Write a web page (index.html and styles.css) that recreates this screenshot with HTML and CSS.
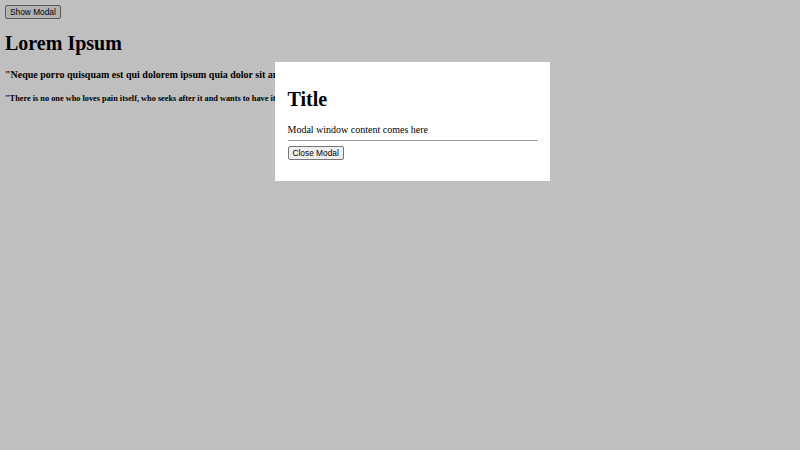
FILE: index.html
```html
<!DOCTYPE html>
<html lang="en">
<head>
    <meta charset="UTF-8">
    <meta name="viewport" content="width=device-width, initial-scale=1.0">
    <title>Modal Demo</title>
    <link rel="stylesheet" href="styles.css">
</head>
<body>

    <button class="btn" onclick="openModal()">Show Modal</button>

    <h1>Lorem Ipsum</h1>
    <h4>"Neque porro quisquam est qui dolorem ipsum quia dolor sit amet, consectetur, adipisci velit..."</h4>
    <h5>"There is no one who loves pain itself, who seeks after it and wants to have it, simply because it is pain..."</h5>

    <div class="overlay" id="overlay">
        <div class="modal">
            <h1>Title</h1>
            <div class="modal-body">Modal window content comes here</div>
            <hr>
            <button class="btn" onclick="closeModal()">Close Modal</button>
        </div>
    </div>

    <script>
    function openModal() {
        document.getElementById('overlay').style.display = 'block';
    }
    function closeModal() {
        document.getElementById('overlay').style.display = 'none';
    }
    </script>

</body>
</html>
```

FILE: styles.css
```css
body {
    font-family: "Liberation Serif", "Times New Roman", serif;
    font-size: 10px;
    margin: 5px;
    background-color: #fff;
    color: #000;
}
h1 {
    font-size: 20px;
    margin: 0.67em 0;
}
h4 {
    font-size: 10px;
    margin: 1.33em 0;
    white-space: nowrap;
}
h5 {
    font-size: 8.3px;
    margin: 1.67em 0;
    white-space: nowrap;
}
.btn {
    font-family: "Liberation Sans", Arial, sans-serif;
    font-size: 8.33px;
    padding: 1px 4px;
    background-color: #efefef;
    color: #000;
    border: 1px solid #767676;
    border-radius: 2px;
    cursor: pointer;
}
.overlay {
    position: fixed;
    top: 0;
    left: 0;
    right: 0;
    bottom: 0;
    background-color: rgba(0, 0, 0, 0.25);
}
.modal {
    position: absolute;
    top: 62px;
    left: 275px;
    width: 250px;
    padding: 12.5px 12.5px 20.5px;
    background-color: #fff;
}
.modal-body {
    font-size: 10px;
}
.modal hr {
    margin: 5px 0;
    border: none;
    border-top: 1px solid #9a9a9a;
}
```
